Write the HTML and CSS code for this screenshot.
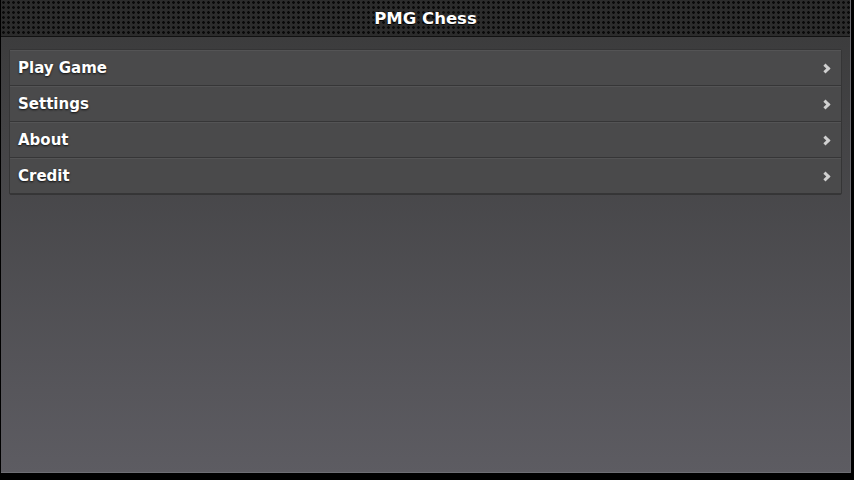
FILE: index.html
```html
<!DOCTYPE html>
<html lang="en">
<head>
  <meta charset="UTF-8" />
  <title>PMG Chess</title>
  <link rel="stylesheet" href="styles.css">
</head>
<body>
  <div class="screen">
    <header class="topbar">
      <h1>PMG Chess</h1>
    </header>

    <div class="content">
      <ul class="menu">
        <li><span>Play Game</span><i class="chev"></i></li>
        <li><span>Settings</span><i class="chev"></i></li>
        <li><span>About</span><i class="chev"></i></li>
        <li><span>Credit</span><i class="chev"></i></li>
      </ul>
    </div>
  </div>
</body>
</html>
```

FILE: styles.css
```css
* {
  box-sizing: border-box;
}

body {
  margin: 0;
  background: #000;
  font-family: 'DejaVu Sans', sans-serif;
  color: #fff;
}

.screen {
  width: 850px;
  height: 473px;
  margin-left: 1px;
  display: flex;
  flex-direction: column;
  border-right: 1px solid #6a6a70;
  border-bottom: 1px solid #6e6e74;
}

.topbar {
  height: 37px;
  background-color: #2c2c2c;
  background-image: radial-gradient(circle, #0a0a0a 1.1px, transparent 1.6px);
  background-size: 5px 5px;
  border-bottom: 1px solid #111;
  display: flex;
  align-items: center;
  justify-content: center;
}

.topbar h1 {
  margin: 0;
  font-size: 16.5px;
  font-weight: bold;
  text-shadow: 0 1px 1px #000;
}

.content {
  flex: 1;
  background: linear-gradient(to bottom, #3c3c3d, #5d5c62);
  padding: 12px 8px 0 8px;
}

.menu {
  list-style: none;
  margin: 0;
  padding: 0;
  border: 1px solid #353536;
  border-radius: 2px;
}

.menu li {
  height: 36px;
  background: #4a4a4b;
  border-top: 1px solid #545455;
  border-bottom: 1px solid #363637;
  display: flex;
  align-items: center;
  justify-content: space-between;
  padding: 0 12px 0 8px;
  font-size: 15px;
  font-weight: bold;
  text-shadow: 0 1px 2px #111;
}

.chev {
  width: 7px;
  height: 7px;
  border-top: 3px solid #d0d0d0;
  border-right: 3px solid #d0d0d0;
  transform: rotate(45deg);
}
```
